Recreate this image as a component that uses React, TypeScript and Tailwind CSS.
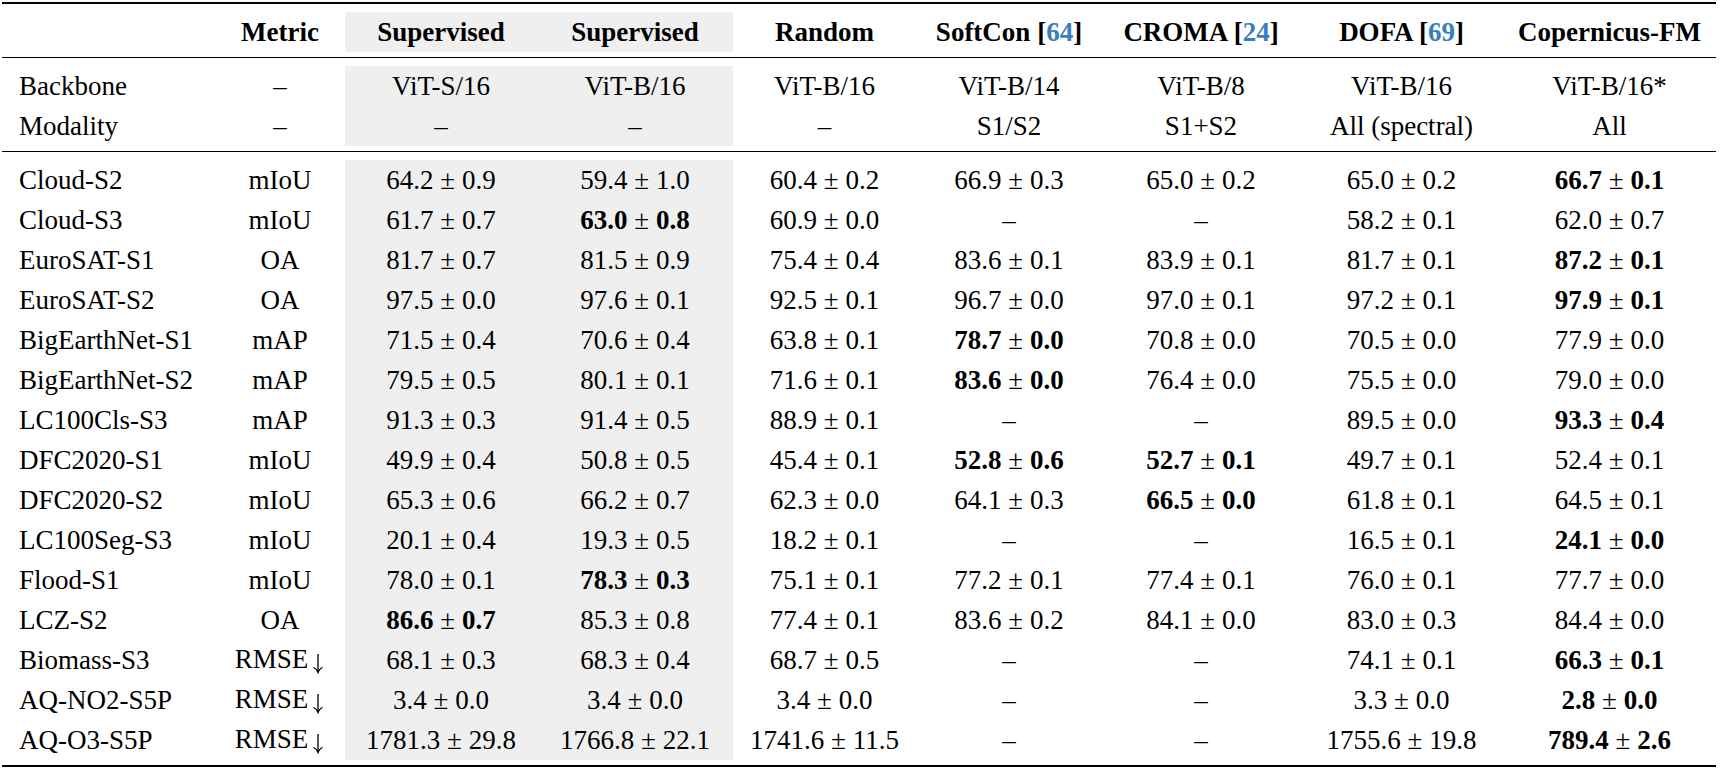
import { ReactNode } from "react";

// column widths, left to right (dataset, metric, 7 models)
const GRID =
    "grid grid-cols-[213px_130px_192px_196px_183px_186px_198px_203px_213px]";

type Row = [string, string, ...string[]];

const DATA: Row[] = [
    ["Cloud-S2", "mIoU", "64.2 ± 0.9", "59.4 ± 1.0", "60.4 ± 0.2", "66.9 ± 0.3", "65.0 ± 0.2", "65.0 ± 0.2", "*66.7 ± 0.1"],
    ["Cloud-S3", "mIoU", "61.7 ± 0.7", "*63.0 ± 0.8", "60.9 ± 0.0", "–", "–", "58.2 ± 0.1", "62.0 ± 0.7"],
    ["EuroSAT-S1", "OA", "81.7 ± 0.7", "81.5 ± 0.9", "75.4 ± 0.4", "83.6 ± 0.1", "83.9 ± 0.1", "81.7 ± 0.1", "*87.2 ± 0.1"],
    ["EuroSAT-S2", "OA", "97.5 ± 0.0", "97.6 ± 0.1", "92.5 ± 0.1", "96.7 ± 0.0", "97.0 ± 0.1", "97.2 ± 0.1", "*97.9 ± 0.1"],
    ["BigEarthNet-S1", "mAP", "71.5 ± 0.4", "70.6 ± 0.4", "63.8 ± 0.1", "*78.7 ± 0.0", "70.8 ± 0.0", "70.5 ± 0.0", "77.9 ± 0.0"],
    ["BigEarthNet-S2", "mAP", "79.5 ± 0.5", "80.1 ± 0.1", "71.6 ± 0.1", "*83.6 ± 0.0", "76.4 ± 0.0", "75.5 ± 0.0", "79.0 ± 0.0"],
    ["LC100Cls-S3", "mAP", "91.3 ± 0.3", "91.4 ± 0.5", "88.9 ± 0.1", "–", "–", "89.5 ± 0.0", "*93.3 ± 0.4"],
    ["DFC2020-S1", "mIoU", "49.9 ± 0.4", "50.8 ± 0.5", "45.4 ± 0.1", "*52.8 ± 0.6", "*52.7 ± 0.1", "49.7 ± 0.1", "52.4 ± 0.1"],
    ["DFC2020-S2", "mIoU", "65.3 ± 0.6", "66.2 ± 0.7", "62.3 ± 0.0", "64.1 ± 0.3", "*66.5 ± 0.0", "61.8 ± 0.1", "64.5 ± 0.1"],
    ["LC100Seg-S3", "mIoU", "20.1 ± 0.4", "19.3 ± 0.5", "18.2 ± 0.1", "–", "–", "16.5 ± 0.1", "*24.1 ± 0.0"],
    ["Flood-S1", "mIoU", "78.0 ± 0.1", "*78.3 ± 0.3", "75.1 ± 0.1", "77.2 ± 0.1", "77.4 ± 0.1", "76.0 ± 0.1", "77.7 ± 0.0"],
    ["LCZ-S2", "OA", "*86.6 ± 0.7", "85.3 ± 0.8", "77.4 ± 0.1", "83.6 ± 0.2", "84.1 ± 0.0", "83.0 ± 0.3", "84.4 ± 0.0"],
    ["Biomass-S3", "RMSE", "68.1 ± 0.3", "68.3 ± 0.4", "68.7 ± 0.5", "–", "–", "74.1 ± 0.1", "*66.3 ± 0.1"],
    ["AQ-NO2-S5P", "RMSE", "3.4 ± 0.0", "3.4 ± 0.0", "3.4 ± 0.0", "–", "–", "3.3 ± 0.0", "*2.8 ± 0.0"],
    ["AQ-O3-S5P", "RMSE", "1781.3 ± 29.8", "1766.8 ± 22.1", "1741.6 ± 11.5", "–", "–", "1755.6 ± 19.8", "*789.4 ± 2.6"],
];

function Cite({ n }: { n: number }) {
    return (
        <span>
            [<span className="text-[#3b7dbd]">{n}</span>]
        </span>
    );
}

// thin math-style down arrow, like \downarrow
function DownArrow() {
    return (
        <svg
            width="14"
            height="22"
            viewBox="0 0 14 22"
            className="inline-block align-[-6px] ml-[3px]"
            fill="none"
            stroke="currentColor"
            strokeWidth="1.3"
        >
            <path d="M7 2V20" />
            <path d="M2.5 15.5Q6 17 7 20.5Q8 17 11.5 15.5" />
        </svg>
    );
}

const HEADER: ReactNode[] = [
    "",
    "Metric",
    "Supervised",
    "Supervised",
    "Random",
    <span>SoftCon <Cite n={64} /></span>,
    <span>CROMA <Cite n={24} /></span>,
    <span>DOFA <Cite n={69} /></span>,
    "Copernicus-FM",
];

const BACKBONE = ["Backbone", "–", "ViT-S/16", "ViT-B/16", "ViT-B/16", "ViT-B/14", "ViT-B/8", "ViT-B/16", "ViT-B/16*"];
const MODALITY = ["Modality", "–", "–", "–", "–", "S1/S2", "S1+S2", "All (spectral)", "All"];

function Value({ text }: { text: string }) {
    if (text === "RMSE")
        return (
            <span>
                RMSE
                <DownArrow />
            </span>
        );
    if (!text.startsWith("*")) return <span>{text}</span>;
    const [a, b] = text.slice(1).split(" ± ");
    return (
        <span>
            <b>{a}</b> ± <b>{b}</b>
        </span>
    );
}

function TableRow({ cells, bold }: { cells: ReactNode[]; bold?: boolean }) {
    return (
        <div className={`${GRID} h-[40px]`}>
            {cells.map((c, i) => (
                <div
                    key={i}
                    className={
                        "flex items-center whitespace-nowrap " +
                        (i === 0 ? "justify-start pl-[17px] " : "justify-center ") +
                        (i === 2 || i === 3 ? "bg-[#efefef] " : "") +
                        (bold ? "font-bold" : "")
                    }
                >
                    {typeof c === "string" ? <Value text={c} /> : c}
                </div>
            ))}
        </div>
    );
}

export default function App() {
    return (
        <div className="w-[1724px] h-[770px] bg-white text-black font-['Liberation_Serif','Times_New_Roman',serif] text-[27px] leading-none pt-[2px]">
            <div className="ml-[2px] w-[1714px]">
                <div className="h-[2px] bg-black" />
                <div className="h-[8px]" />
                <TableRow cells={HEADER} bold />
                <div className="h-[5px]" />
                <div className="h-[1px] bg-black" />
                <div className="h-[8px]" />
                <TableRow cells={BACKBONE} />
                <TableRow cells={MODALITY} />
                <div className="h-[5px]" />
                <div className="h-[1px] bg-black" />
                <div className="h-[8px]" />
                {DATA.map((r) => (
                    <TableRow key={r[0]} cells={r} />
                ))}
                <div className="h-[5px]" />
                <div className="h-[2px] bg-black" />
            </div>
        </div>
    );
}
